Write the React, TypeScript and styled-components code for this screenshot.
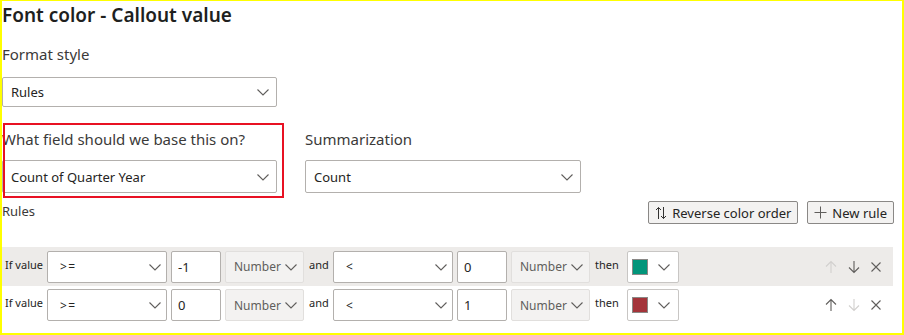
import React from 'react'
import styled, { createGlobalStyle } from 'styled-components'

const GlobalStyle = createGlobalStyle`
  html, body { margin: 0; padding: 0; background: #ffffff; }
  body { font-family: "Noto Sans", "Open Sans", sans-serif; color: #252423; }
`;

const Frame = styled.div`
  width: 904px;
  height: 335px;
  box-sizing: border-box;
  border-top: 1px solid #ffff00;
  border-left: 2px solid #ffff00;
  border-right: 2px solid #ffff00;
  border-bottom: 2px solid #ffff00;
  overflow: hidden;
  display: flex;
  flex-direction: column;
`;

const Title = styled.div`
  font-size: 19px;
  font-weight: 600;
  color: #201f1e;
  line-height: 26px;
  margin-top: 1px;
`;

const Label = styled.div`
  font-size: 15px;
  color: #3b3a39;
  line-height: 20px;
`;

const Section = styled.div`
  display: flex;
  flex-direction: column;
  gap: 13px;
  margin-top: 16px;
`;

const Select = styled.div<{ $w: number; $h?: number }>`
  width: ${(p) => p.$w}px;
  height: ${(p) => p.$h ?? 30}px;
  box-sizing: border-box;
  border: 1px solid #b3b0ad;
  border-radius: 2px;
  background: #ffffff;
  display: flex;
  align-items: center;
  justify-content: space-between;
  padding: 0 6px 0 8px;
  font-size: 13px;
  color: #252423;
`;

const FieldRow = styled.div`
  display: flex;
  gap: 28px;
  margin-top: 22px;
  align-items: flex-start;
`;

const Field = styled.div`
  position: relative;
  display: flex;
  flex-direction: column;
  gap: 11px;
`;

/* annotation box drawn over the first field */
const RedMark = styled.div`
  position: absolute;
  left: 1px;
  top: -6px;
  width: 281px;
  height: 75px;
  box-sizing: border-box;
  border: 2px solid #e81123;
  pointer-events: none;
`;

const RulesBar = styled.div`
  display: flex;
  justify-content: space-between;
  align-items: flex-start;
  margin-top: 8px;
  padding-right: 8px;
`;

const SmallLabel = styled.div`
  font-size: 13px;
  color: #3b3a39;
  line-height: 18px;
  padding-top: 1px;
`;

const Buttons = styled.div`
  display: flex;
  gap: 9px;
`;

const Button = styled.div`
  height: 23px;
  box-sizing: border-box;
  border: 1px solid #8a8886;
  border-radius: 2px;
  background: #f3f2f1;
  display: flex;
  align-items: center;
  gap: 5px;
  padding: 0 6px;
  font-size: 13px;
  color: #252423;
`;

const RuleList = styled.div`
  margin-top: 23px;
  margin-left: -2px;
  display: flex;
  flex-direction: column;
`;

const RuleRow = styled.div<{ $shaded?: boolean }>`
  width: 893px;
  box-sizing: border-box;
  height: ${(p) => (p.$shaded ? 39 : 38)}px;
  background: ${(p) => (p.$shaded ? '#edebe9' : '#ffffff')};
  display: flex;
  align-items: center;
  padding-left: 5px;
  padding-right: 11px;
`;

const RuleText = styled.span<{ $w: number; $ml?: number }>`
  width: ${(p) => p.$w}px;
  flex-shrink: 0;
  white-space: nowrap;
  font-size: 11px;
  color: #252423;
  margin-left: ${(p) => p.$ml ?? 0}px;
  margin-top: -5px;
`;

const OpSelect = styled(Select)<{ $ml: number }>`
  flex-shrink: 0;
  margin-left: ${(p) => p.$ml}px;
  height: 32px;
  padding: 0 4px 0 12px;
  font-size: 12px;
  letter-spacing: 1.5px;
`;

const Input = styled.div<{ $ml: number }>`
  flex-shrink: 0;
  width: 50px;
  height: 32px;
  box-sizing: border-box;
  border: 1px solid #b3b0ad;
  border-radius: 2px;
  background: #ffffff;
  margin-left: ${(p) => p.$ml}px;
  display: flex;
  align-items: center;
  padding-left: 6px;
  font-size: 13px;
`;

const TypeSelect = styled.div<{ $ml: number }>`
  flex-shrink: 0;
  width: 79px;
  height: 32px;
  box-sizing: border-box;
  border: 1px solid #e1dfdd;
  border-radius: 2px;
  background: #f3f2f1;
  margin-left: ${(p) => p.$ml}px;
  display: flex;
  align-items: center;
  justify-content: space-between;
  padding: 0 5px 0 8px;
  font-size: 12px;
  color: #605e5c;
`;

const ColorSelect = styled.div`
  flex-shrink: 0;
  width: 52px;
  height: 32px;
  box-sizing: border-box;
  border: 1px solid #c8c6c4;
  border-radius: 2px;
  background: #ffffff;
  margin-left: 7px;
  display: flex;
  align-items: center;
  justify-content: space-between;
  padding: 0 7px 0 4px;
`;

const Swatch = styled.div<{ $c: string }>`
  width: 16px;
  height: 16px;
  box-sizing: border-box;
  background: ${(p) => p.$c};
  border: 1px solid #8a8886;
`;

const Actions = styled.div`
  margin-left: auto;
  display: flex;
  gap: 9px;
  align-items: center;
`;

const Chevron = ({ color = '#605e5c' }: { color?: string }) => (
  <svg width="14" height="14" viewBox="0 0 14 14">
    <path d="M1.5 4.5 L7 10 L12.5 4.5" fill="none" stroke={color} strokeWidth="1.1" />
  </svg>
);

const ArrowUp = ({ on }: { on: boolean }) => (
  <svg width="14" height="14" viewBox="0 0 14 14">
    <path d="M7 13 V1.5 M2 6.5 L7 1.5 L12 6.5" fill="none" stroke={on ? '#605e5c' : '#d2d0ce'} strokeWidth="1.1" />
  </svg>
);

const ArrowDown = ({ on }: { on: boolean }) => (
  <svg width="14" height="14" viewBox="0 0 14 14">
    <path d="M7 1 V12.5 M2 7.5 L7 12.5 L12 7.5" fill="none" stroke={on ? '#605e5c' : '#d2d0ce'} strokeWidth="1.1" />
  </svg>
);

const Close = () => (
  <svg width="12" height="12" viewBox="0 0 12 12">
    <path d="M1.5 1.5 L10.5 10.5 M10.5 1.5 L1.5 10.5" fill="none" stroke="#605e5c" strokeWidth="1.1" />
  </svg>
);

const ReverseIcon = () => (
  <svg width="12" height="14" viewBox="0 0 12 14">
    <path d="M3.5 13 V1.5 M1 4 L3.5 1.5 L6 4 M8.5 1 V12.5 M6 10 L8.5 12.5 L11 10" fill="none" stroke="#323130" strokeWidth="1" />
  </svg>
);

const PlusIcon = () => (
  <svg width="13" height="13" viewBox="0 0 13 13">
    <path d="M6.5 0.5 V12.5 M0.5 6.5 H12.5" fill="none" stroke="#605e5c" strokeWidth="1" />
  </svg>
);

type Rule = { op1: string; v1: string; op2: string; v2: string; color: string; up: boolean; down: boolean };

const rules: Rule[] = [
  { op1: '>=', v1: '-1', op2: '<', v2: '0', color: '#01957a', up: false, down: true },
  { op1: '>=', v1: '0', op2: '<', v2: '1', color: '#a4343a', up: true, down: false },
];

export default function App() {
  return (
    <>
      <GlobalStyle />
      <Frame>
        <Title>Font color - Callout value</Title>
        <Section>
          <Label>Format style</Label>
          <Select $w={275} $h={30}>
            <span>Rules</span>
            <Chevron />
          </Select>
        </Section>
        <FieldRow>
          <Field>
            <Label>What field should we base this on?</Label>
            <Select $w={275} $h={33}>
              <span>Count of Quarter Year</span>
              <Chevron />
            </Select>
            <RedMark />
          </Field>
          <Field>
            <Label>Summarization</Label>
            <Select $w={276} $h={33}>
              <span>Count</span>
              <Chevron />
            </Select>
          </Field>
        </FieldRow>
        <RulesBar>
          <SmallLabel>Rules</SmallLabel>
          <Buttons>
            <Button>
              <ReverseIcon />
              Reverse color order
            </Button>
            <Button>
              <PlusIcon />
              New rule
            </Button>
          </Buttons>
        </RulesBar>
        <RuleList>
          {rules.map((r, i) => (
            <RuleRow key={i} $shaded={i === 0}>
              <RuleText $w={38}>If value</RuleText>
              <OpSelect $w={120} $ml={4}>
                <span>{r.op1}</span>
                <Chevron />
              </OpSelect>
              <Input $ml={4}>{r.v1}</Input>
              <TypeSelect $ml={4}>
                <span>Number</span>
                <Chevron />
              </TypeSelect>
              <RuleText $w={19} $ml={5}>and</RuleText>
              <OpSelect $w={120} $ml={5}>
                <span>{r.op2}</span>
                <Chevron />
              </OpSelect>
              <Input $ml={4}>{r.v2}</Input>
              <TypeSelect $ml={4}>
                <span>Number</span>
                <Chevron />
              </TypeSelect>
              <RuleText $w={25} $ml={5}>then</RuleText>
              <ColorSelect>
                <Swatch $c={r.color} />
                <Chevron />
              </ColorSelect>
              <Actions>
                <ArrowUp on={r.up} />
                <ArrowDown on={r.down} />
                <Close />
              </Actions>
            </RuleRow>
          ))}
        </RuleList>
      </Frame>
    </>
  );
}
